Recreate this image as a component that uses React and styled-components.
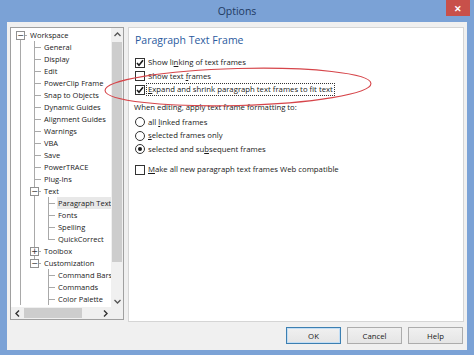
import styled, { createGlobalStyle } from "styled-components";

const GlobalStyle = createGlobalStyle`
  html, body { margin: 0; padding: 0; background: #7ba2d6; }
  body { font-family: "Open Sans", "Noto Sans", sans-serif; }
`;

const Window = styled.div`
  width: 474px;
  height: 355px;
  background: #7ba2d6;
  display: flex;
  flex-direction: column;
  box-sizing: border-box;
  padding: 0 7px 5px 7px;
  position: relative;
  overflow: hidden;
`;

const TitleBar = styled.div`
  height: 22px;
  display: grid;
  grid-template-columns: 1fr auto 1fr;
  align-items: start;
`;

const Title = styled.div`
  grid-column: 2;
  font-size: 10.5px;
  line-height: 23px;
  color: #1e3a62;
`;

const CloseButton = styled.div`
  grid-column: 3;
  justify-self: end;
  width: 24px;
  height: 16px;
  margin-right: -3px;
  background: #c8504a;
  color: #fff;
  font-size: 9px;
  font-weight: 700;
  display: flex;
  align-items: center;
  justify-content: center;
`;

const Client = styled.div`
  flex: 1;
  background: #f0f0f0;
  display: flex;
  flex-direction: column;
  padding: 5px 3px 0 3px;
`;

const Body = styled.div`
  display: flex;
  align-items: flex-start;
  gap: 4px;
  height: 295px;
`;

const TreeBox = styled.div`
  width: 112px;
  height: 291px;
  border: 1px solid #a0a0a0;
  background: #fff;
  display: grid;
  grid-template-columns: 1fr 12px;
  grid-template-rows: 1fr 12px;
  overflow: hidden;
`;

const TreeList = styled.div`
  overflow: hidden;
  padding-top: 1px;
`;

const Row = styled.div`
  height: 12px;
  display: flex;
  align-items: center;
  padding-left: 2px;
  white-space: nowrap;
  font-size: 7.5px;
  color: #1a1a1a;
`;

const Guide = styled.span`
  position: relative;
  flex: none;
  width: 14px;
  height: 12px;

  &::before {
    content: "";
    position: absolute;
    left: 7px;
    width: 0;
    border-left: 1px solid #a9a9a9;
    top: ${(p) => (p.$kind === "first" ? "6px" : "0")};
    bottom: ${(p) => (p.$kind === "elbow" ? "6px" : "0")};
    display: ${(p) => (p.$kind === "blank" ? "none" : "block")};
  }

  &::after {
    content: "";
    position: absolute;
    left: 7px;
    right: 0;
    top: 6px;
    border-top: 1px solid #a9a9a9;
    display: ${(p) => (p.$kind === "pipe" || p.$kind === "blank" ? "none" : "block")};
  }
`;

const Expander = styled.span`
  position: absolute;
  z-index: 1;
  left: 3px;
  top: 2px;
  width: 7px;
  height: 7px;
  border: 1px solid #919191;
  background: #fff;
  font-size: 8px;
  line-height: 7px;
  text-align: center;
  color: #333;
  font-family: "DejaVu Sans", sans-serif;
`;

const Label = styled.span`
  margin-left: 2px;
  padding: 0 1px;
  line-height: 12px;
  background: ${(p) => (p.$selected ? "#e8e8e8" : "transparent")};
`;

const VScroll = styled.div`
  background: #f0f0f0;
  display: flex;
  flex-direction: column;
  align-items: center;
`;

const HScroll = styled.div`
  background: #f0f0f0;
  display: flex;
  align-items: center;
`;

const Arrow = styled.span`
  flex: none;
  width: 12px;
  height: 12px;
  display: flex;
  align-items: center;
  justify-content: center;
`;

const VThumb = styled.div`
  width: 10px;
  height: 220px;
  margin-top: 2px;
  background: #cdcdcd;
`;

const HThumb = styled.div`
  height: 10px;
  width: 58px;
  margin-left: 1px;
  background: #cdcdcd;
`;

const Spacer = styled.div`
  flex: 1;
`;

const Corner = styled.div`
  background: #f0f0f0;
`;

const Panel = styled.div`
  flex: 1;
  align-self: stretch;
  background: #fff;
  border: 1px solid #d5d5d5;
  padding: 3px 6px;
  display: flex;
  flex-direction: column;
  font-size: 7.75px;
  color: #1a1a1a;
`;

const PanelTitle = styled.div`
  font-size: 10.5px;
  color: #2a5a9e;
  height: 18px;
  line-height: 18px;
  margin-bottom: 7px;
`;

const Option = styled.label`
  display: flex;
  align-items: center;
  height: 13.5px;
  margin-top: ${(p) => p.$gap || 0}px;
`;

const Box = styled.span`
  width: 8px;
  height: 8px;
  margin-right: 1px;
  border: 1px solid #333;
  background: #fff;
  border-radius: ${(p) => (p.$round ? "50%" : "0")};
  display: flex;
  align-items: center;
  justify-content: center;
  flex: none;
`;

const Dot = styled.span`
  width: 4px;
  height: 4px;
  border-radius: 50%;
  background: #1a1a1a;
`;

const OptionText = styled.span`
  line-height: 11px;
  padding: 0 1px;
  border: 1px dotted ${(p) => (p.$focus ? "#333" : "transparent")};
`;

const Key = styled.span`
  text-decoration: underline;
`;

const Caption = styled.div`
  height: 13px;
  line-height: 13px;
  margin: 4px 0 2px -1px;
`;

const Footer = styled.div`
  display: flex;
  justify-content: flex-end;
  gap: 6px;
  padding: 5px 1px 0 0;
`;

const Button = styled.button`
  width: 55px;
  height: 17px;
  padding: 0;
  font-family: inherit;
  font-size: 7.75px;
  color: #1a1a1a;
  background: linear-gradient(#f0f0f0, #e5e5e5);
  border: 1px solid ${(p) => (p.$primary ? "#3c7fb1" : "#acacac")};
  box-shadow: ${(p) => (p.$primary ? "inset 0 0 0 1px #c3def5" : "none")};
`;

const Ellipse = styled.svg`
  position: absolute;
  left: 0;
  top: 0;
  pointer-events: none;
`;

const Check = () => (
  <svg width="8" height="8" viewBox="0 0 8 8">
    <path d="M1 4 L3 6.3 L7 1.2" fill="none" stroke="#1a1a1a" strokeWidth="1.6" />
  </svg>
);

const tree = [
  { label: "Workspace", guides: ["first"], exp: "−" },
  { label: "General", guides: ["pipe", "tee"] },
  { label: "Display", guides: ["pipe", "tee"] },
  { label: "Edit", guides: ["pipe", "tee"] },
  { label: "PowerClip Frame", guides: ["pipe", "tee"] },
  { label: "Snap to Objects", guides: ["pipe", "tee"] },
  { label: "Dynamic Guides", guides: ["pipe", "tee"] },
  { label: "Alignment Guides", guides: ["pipe", "tee"] },
  { label: "Warnings", guides: ["pipe", "tee"] },
  { label: "VBA", guides: ["pipe", "tee"] },
  { label: "Save", guides: ["pipe", "tee"] },
  { label: "PowerTRACE", guides: ["pipe", "tee"] },
  { label: "Plug-Ins", guides: ["pipe", "tee"] },
  { label: "Text", guides: ["pipe", "tee"], exp: "−" },
  { label: "Paragraph Text", guides: ["pipe", "pipe", "tee"], selected: true },
  { label: "Fonts", guides: ["pipe", "pipe", "tee"] },
  { label: "Spelling", guides: ["pipe", "pipe", "tee"] },
  { label: "QuickCorrect", guides: ["pipe", "pipe", "elbow"] },
  { label: "Toolbox", guides: ["pipe", "tee"], exp: "+" },
  { label: "Customization", guides: ["pipe", "elbow"], exp: "−" },
  { label: "Command Bars", guides: ["pipe", "blank", "tee"] },
  { label: "Commands", guides: ["pipe", "blank", "tee"] },
  { label: "Color Palette", guides: ["pipe", "blank", "tee"] },
];

const TreeRow = ({ item }) => (
  <Row>
    {item.guides.map((g, i) => (
      <Guide key={i} $kind={g}>
        {item.exp && i === item.guides.length - 1 && <Expander>{item.exp}</Expander>}
      </Guide>
    ))}
    <Label $selected={item.selected}>{item.label}</Label>
  </Row>
);

export default function App() {
  return (
    <Window>
      <GlobalStyle />
      <TitleBar>
        <Title>Options</Title>
        <CloseButton>✕</CloseButton>
      </TitleBar>
      <Client>
        <Body>
          <TreeBox>
            <TreeList>
              {tree.map((item) => (
                <TreeRow key={item.label} item={item} />
              ))}
            </TreeList>
            <VScroll>
              <Arrow>
                <svg width="7" height="5" viewBox="0 0 7 5">
                  <path d="M0.5 4 L3.5 1 L6.5 4" fill="none" stroke="#555" strokeWidth="1.3" />
                </svg>
              </Arrow>
              <VThumb />
              <Spacer />
              <Arrow>
                <svg width="7" height="5" viewBox="0 0 7 5">
                  <path d="M0.5 1 L3.5 4 L6.5 1" fill="none" stroke="#555" strokeWidth="1.3" />
                </svg>
              </Arrow>
            </VScroll>
            <HScroll>
              <Arrow>
                <svg width="5" height="7" viewBox="0 0 5 7">
                  <path d="M4 0.5 L1 3.5 L4 6.5" fill="none" stroke="#333" strokeWidth="1.4" />
                </svg>
              </Arrow>
              <HThumb />
              <Spacer />
              <Arrow>
                <svg width="5" height="7" viewBox="0 0 5 7">
                  <path d="M1 0.5 L4 3.5 L1 6.5" fill="none" stroke="#333" strokeWidth="1.4" />
                </svg>
              </Arrow>
            </HScroll>
            <Corner />
          </TreeBox>
          <Panel>
            <PanelTitle>Paragraph Text Frame</PanelTitle>
            <Option>
              <Box><Check /></Box>
              <OptionText>Show li<Key>n</Key>king of text frames</OptionText>
            </Option>
            <Option>
              <Box />
              <OptionText>Show text <Key>f</Key>rames</OptionText>
            </Option>
            <Option>
              <Box><Check /></Box>
              <OptionText $focus><Key>E</Key>xpand and shrink paragraph text frames to fit text</OptionText>
            </Option>
            <Caption>When editing, apply text frame formatting to:</Caption>
            <Option>
              <Box $round />
              <OptionText>all <Key>l</Key>inked frames</OptionText>
            </Option>
            <Option>
              <Box $round />
              <OptionText><Key>s</Key>elected frames only</OptionText>
            </Option>
            <Option>
              <Box $round><Dot /></Box>
              <OptionText>selected and su<Key>b</Key>sequent frames</OptionText>
            </Option>
            <Option $gap={7}>
              <Box />
              <OptionText><Key>M</Key>ake all new paragraph text frames Web compatible</OptionText>
            </Option>
          </Panel>
        </Body>
        <Footer>
          <Button $primary>OK</Button>
          <Button>Cancel</Button>
          <Button>Help</Button>
        </Footer>
      </Client>
      <Ellipse width="474" height="355" viewBox="0 0 474 355">
        <ellipse
          cx="238"
          cy="87"
          rx="133"
          ry="18.5"
          fill="none"
          stroke="#d6454a"
          strokeWidth="1.1"
          transform="rotate(-1.5 238 87)"
        />
      </Ellipse>
    </Window>
  );
}
